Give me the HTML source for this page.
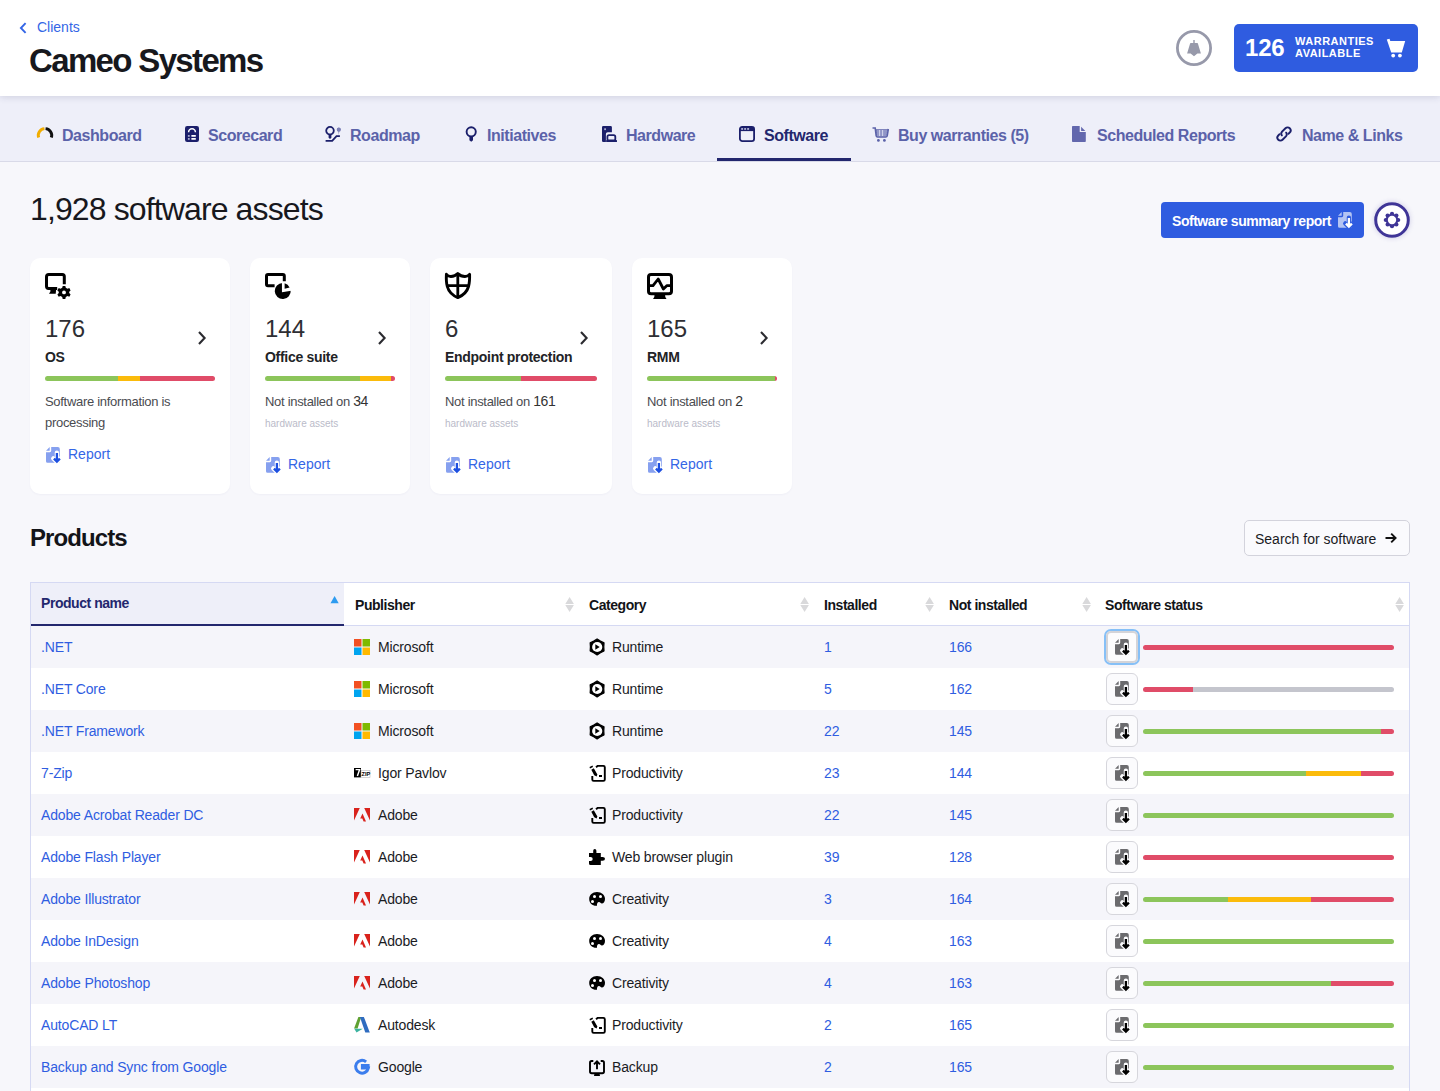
<!DOCTYPE html>
<html><head><meta charset="utf-8">
<style>
*{box-sizing:border-box;margin:0;padding:0}
html,body{width:1440px;height:1091px;overflow:hidden}
body{font-family:"Liberation Sans",sans-serif;background:#f7f7fb;position:relative;color:#15161a}
.abs{position:absolute}
.t{position:absolute;white-space:nowrap}
#hdr{position:absolute;left:0;top:0;width:1440px;height:96px;background:#fff;z-index:3;box-shadow:0 1px 7px rgba(40,40,90,0.16)}
#tabs{position:absolute;left:0;top:96px;width:1440px;height:66px;background:#eeeff9;border-bottom:1px solid #d9dae8;z-index:1}
.tabt{position:absolute;top:30px;font-size:16px;line-height:20px;font-weight:bold;color:#5b62a9;white-space:nowrap;letter-spacing:-0.45px}
.card{position:absolute;top:258px;height:236px;background:#fff;border-radius:10px;box-shadow:0 1px 2px rgba(60,60,120,0.04)}
.bar{position:absolute;height:5px;border-radius:3px;overflow:hidden;display:flex}
.bar i{display:block;height:100%}
.g{background:#8cc55b}.y{background:#fbbb0b}.r{background:#e04c68}.gr{background:#c4c5cd}
.num{font-size:24px;line-height:28px;color:#2e2e33}
.lbl{font-size:14px;line-height:18px;font-weight:bold;color:#222326;letter-spacing:-0.3px}
.ctext{font-size:13px;line-height:21px;color:#4a4b50;letter-spacing:-0.3px}
.hw{font-size:10px;line-height:14px;color:#babbc9}
.rep{font-size:14px;line-height:18px;color:#3466e6}
.row{position:absolute;left:31px;width:1378px;height:42px}
.cell{position:absolute;top:0;height:42px;line-height:42px;font-size:14px;white-space:nowrap;color:#1a1b1f;letter-spacing:-0.15px}
.lnk{color:#2f5de1}
.th{position:absolute;top:0;height:42px;line-height:42px;font-size:14px;font-weight:bold;color:#131418;white-space:nowrap;letter-spacing:-0.45px}
</style></head><body>

<div id="hdr">
<svg class="abs" style="left:18px;top:21px" width="10" height="14" viewBox="0 0 10 14"><path d="M7.6 2.2 L2.9 7 L7.6 11.8" fill="none" stroke="#3466e6" stroke-width="1.9"/></svg>
<div class="t" style="left:37px;top:18px;font-size:14px;line-height:18px;color:#3466e6">Clients</div>
<div class="t" style="left:29px;top:42px;font-size:33px;line-height:38px;font-weight:bold;color:#17181d;letter-spacing:-1.65px">Cameo Systems</div>
<svg class="abs" style="left:1175px;top:29px" width="38" height="38" viewBox="0 0 38 38"><circle cx="19" cy="19" r="16.6" fill="none" stroke="#9799aa" stroke-width="2.8"/><path d="M18.3 11 H19.7 V14.2 H18.3 Z M15.6 14.1 H22.4 Q22.8 14.1 22.9 14.5 L25.9 24.6 H12.1 L15.1 14.5 Q15.2 14.1 15.6 14.1 Z M15.6 24.4 H22.4 L19 27.3 Z" fill="#9799aa"/></svg>
<div class="abs" style="left:1234px;top:24px;width:184px;height:48px;background:#2f5ce0;border-radius:5px"></div>
<div class="t" style="left:1245px;top:34px;font-size:24px;line-height:28px;font-weight:bold;color:#fff;letter-spacing:-0.2px">126</div>
<div class="t" style="left:1295px;top:35px;font-size:11px;line-height:12px;font-weight:bold;color:#fff;letter-spacing:0.5px">WARRANTIES<br>AVAILABLE</div>
<svg class="abs" style="left:1380px;top:32px" width="32" height="32" viewBox="0 0 32 32"><path d="M6.8 7.6 L9.5 6.8 L10.3 9 H25.2 L21.8 20.6 H11.2 Z" fill="#fff"/><circle cx="13.2" cy="23.6" r="1.9" fill="#fff"/><circle cx="19.9" cy="23.6" r="1.9" fill="#fff"/></svg>
</div>
<div id="tabs">
<div class="tabt" style="left:62px;color:#5b62a9">Dashboard</div>
<div class="tabt" style="left:208px;color:#5b62a9">Scorecard</div>
<div class="tabt" style="left:350px;color:#5b62a9">Roadmap</div>
<div class="tabt" style="left:487px;color:#5b62a9">Initiatives</div>
<div class="tabt" style="left:626px;color:#5b62a9">Hardware</div>
<div class="tabt" style="left:764px;color:#23276e">Software</div>
<div class="tabt" style="left:898px;color:#5b62a9">Buy warranties (5)</div>
<div class="tabt" style="left:1097px;color:#5b62a9">Scheduled Reports</div>
<div class="tabt" style="left:1302px;color:#5b62a9">Name &amp; Links</div>
<svg class="abs" style="left:34px;top:29px" width="24" height="16" viewBox="0 0 24 16"><path d="M4.70 12.59 A6.7 6.7 0 0 1 10.42 3.63" fill="none" stroke="#f1ad00" stroke-width="3"/><path d="M11.58 3.63 A6.7 6.7 0 0 1 17.30 12.59" fill="none" stroke="#111" stroke-width="3"/></svg>
<svg class="abs" style="left:185px;top:30px" width="14" height="16" viewBox="0 0 14 16"><rect x="0" y="0" width="14" height="16" rx="2.2" fill="#1b1f6b"/><path d="M3.6 6.2 A3.4 3.4 0 0 1 10.4 6.2" fill="none" stroke="#fff" stroke-width="1.5"/><rect x="2.9" y="9" width="1.8" height="1.8" fill="#a9abcf"/><rect x="6.2" y="9.1" width="4.8" height="1.7" rx=".8" fill="#fff"/><rect x="2.9" y="12" width="1.8" height="1.8" fill="#a9abcf"/><rect x="6.2" y="12.1" width="4.8" height="1.7" rx=".8" fill="#fff"/></svg>
<svg class="abs" style="left:324px;top:30px" width="18" height="17" viewBox="0 0 18 17"><circle cx="6" cy="4.7" r="3.8" fill="none" stroke="#1b1f6b" stroke-width="1.8"/><path d="M4.6 8 H7.4 V11.7 L6 13 L4.6 11.7 Z" fill="#1b1f6b"/><path d="M1.6 14.8 H8.2 L12.5 10.1 H15.9" fill="none" stroke="#1b1f6b" stroke-width="1.8"/><path d="M14.3 5.3 A1.9 1.9 0 1 1 15.3 5.3 L14.8 9 Z" fill="#7b7fb6"/><circle cx="14.8" cy="3.8" r="2" fill="#7b7fb6"/></svg>
<svg class="abs" style="left:464px;top:30px" width="14" height="16" viewBox="0 0 14 16"><circle cx="7.2" cy="5.8" r="4.6" fill="none" stroke="#1b1f6b" stroke-width="1.9"/><path d="M5.4 10 H9 V14.2 L7.2 15.8 L5.4 14.2 Z" fill="#1b1f6b"/></svg>
<svg class="abs" style="left:602px;top:30px" width="16" height="16" viewBox="0 0 16 16"><path d="M1.2 0 H8.6 Q9.9 0 9.9 1.3 V6.3 H5.7 Q3.9 6.3 3.9 8.1 V16 H1.2 Q0 16 0 14.8 V1.3 Q0 0 1.2 0 Z" fill="#1b1f6b"/><rect x="2.2" y="2.3" width="1.8" height="1.8" fill="#a9abcf"/><rect x="5.4" y="9.1" width="7.9" height="5.4" rx="1.6" fill="none" stroke="#1b1f6b" stroke-width="1.8"/><rect x="4.1" y="14.1" width="10.9" height="1.9" rx=".6" fill="#1b1f6b"/></svg>
<svg class="abs" style="left:739px;top:30px" width="16" height="16" viewBox="0 0 16 16"><rect x="0.9" y="0.9" width="14.2" height="14.2" rx="2.4" fill="none" stroke="#1b1f6b" stroke-width="1.8"/><rect x="0.9" y="0.9" width="14.2" height="4.2" fill="#1b1f6b"/><rect x="2.2" y="2" width="1.9" height="1.9" fill="#a9abcf"/><rect x="5.2" y="2" width="1.9" height="1.9" fill="#a9abcf"/><rect x="8.2" y="2" width="1.9" height="1.9" fill="#a9abcf"/></svg>
<svg class="abs" style="left:872px;top:31px" width="18" height="16" viewBox="0 0 18 16"><path d="M0.5 1 H3.2 L4.2 8.9 Q4.4 10 5.5 10 H13.8 Q14.9 10 15.2 8.9 L16.3 2" fill="none" stroke="#5b62a9" stroke-width="1.6"/><path d="M3.6 2.2 H16.3 L15 9.2 H4.4 Z" fill="#5b62a9"/><path d="M4.6 4 H15.2 M4.8 6 H14.9 M5 8 H14.6 M7.6 3 V9 M10.6 3 V9" stroke="#eeeff9" stroke-width=".75"/><circle cx="6.4" cy="13.4" r="1.4" fill="#5b62a9"/><circle cx="12.4" cy="13.4" r="1.4" fill="#5b62a9"/></svg>
<svg class="abs" style="left:1072px;top:30px" width="14" height="16" viewBox="0 0 14 16"><path d="M0.8 0 H7.7 V6 H13.8 V15.2 Q13.8 16 13 16 H0.8 Q0 16 0 15.2 V0.8 Q0 0 0.8 0 Z" fill="#6267ad"/><path d="M9.1 0.7 L13.3 4.9 H9.1 Z" fill="#6267ad"/></svg>
<svg class="abs" style="left:1276px;top:30px" width="16" height="16" viewBox="0 0 16 16"><g transform="translate(9.9,6.1) rotate(-45)"><path d="M-2.2 -3 H-2.2 M0.6 3 H2.4 A3 3 0 0 0 2.4 -3 H-2.4 A3 3 0 0 0 -5.2 -0.6" fill="none" stroke="#1b1f6b" stroke-width="1.9" stroke-linecap="round"/></g><g transform="translate(6.1,9.9) rotate(135)"><path d="M0.6 3 H2.4 A3 3 0 0 0 2.4 -3 H-2.4 A3 3 0 0 0 -5.2 -0.6" fill="none" stroke="#1b1f6b" stroke-width="1.9" stroke-linecap="round"/></g></svg>
<div class="abs" style="left:717px;top:62px;width:134px;height:3px;background:#23276e"></div>
</div>
<div class="t" style="left:30px;top:190px;font-size:32px;line-height:38px;color:#17181d;letter-spacing:-0.88px">1,928 software assets</div>
<div class="abs" style="left:1161px;top:202px;width:203px;height:36px;background:#2f5ce0;border-radius:4px"></div>
<div class="t" style="left:1172px;top:212px;font-size:14px;line-height:18px;font-weight:bold;color:#fff;letter-spacing:-0.46px">Software summary report</div>
<svg class="abs" style="left:1334px;top:207px" width="24" height="24" viewBox="0 0 24 24">
<path d="M4 8.8 L7.7 5 L7.7 8.8 Z" fill="#b4c4f3"/>
<path d="M9.2 5 H15.8 Q17.8 5 17.8 7 V19.2 Q17.8 20.7 16.3 20.7 H5.5 Q4 20.7 4 19.2 V10.2 H7.8 Q9.2 10.2 9.2 8.8 Z" fill="#b4c4f3"/>
<path d="M14.9 10.6 V17.3 M11.2 16.4 L14.9 20.1 L18.6 16.4" fill="none" stroke="#2f5ce0" stroke-width="4.3" stroke-linejoin="round" stroke-linecap="round"/>
<path d="M14.9 10.9 V18.4 M11.9 16.6 L14.9 19.6 L17.9 16.6" fill="none" stroke="#fff" stroke-width="2.3" stroke-linejoin="miter" stroke-linecap="butt"/>
</svg>
<div class="abs" style="left:1374px;top:202px;width:36px;height:36px;border-radius:50%;box-shadow:0 0 5px rgba(70,60,160,0.22)"></div>
<svg class="abs" style="left:1373px;top:201px" width="38" height="38" viewBox="0 0 38 38"><circle cx="19" cy="19" r="16.3" fill="#fff" stroke="#3f3597" stroke-width="3"/><g fill="#3f3597"><circle cx="25.20" cy="19.00" r="2.1"/><circle cx="23.38" cy="23.38" r="2.1"/><circle cx="19.00" cy="25.20" r="2.1"/><circle cx="14.62" cy="23.38" r="2.1"/><circle cx="12.80" cy="19.00" r="2.1"/><circle cx="14.62" cy="14.62" r="2.1"/><circle cx="19.00" cy="12.80" r="2.1"/><circle cx="23.38" cy="14.62" r="2.1"/><circle cx="19" cy="19" r="6.3"/></g><circle cx="19" cy="19" r="4.2" fill="#fff"/></svg>
<div class="card" style="left:30px;width:200px"></div>
<svg class="abs" style="left:40px;top:268px" width="36" height="36" viewBox="0 0 36 36"><path d="M17.2 20.4 H8.6 Q6.5 20.4 6.5 18.3 V8.8 Q6.5 6.5 8.8 6.5 H22.3 Q24.3 6.5 24.3 8.5 V16.2" fill="none" stroke="#000" stroke-width="3"/><path d="M10.4 21 H16.2 L15.7 25.8 H9 L10.4 23.6 Z" fill="#000"/><g transform="translate(24,24.4)"><path d="M-1.3 -6.5 H1.3 L1.8 -4.6 L3.5 -3.6 L5.3 -4.3 L6.6 -2 L5.2 -0.7 V0.7 L6.6 2 L5.3 4.3 L3.5 3.6 L1.8 4.6 L1.3 6.5 H-1.3 L-1.8 4.6 L-3.5 3.6 L-5.3 4.3 L-6.6 2 L-5.2 0.7 V-0.7 L-6.6 -2 L-5.3 -4.3 L-3.5 -3.6 L-1.8 -4.6 Z" fill="#000"/><circle r="1.9" fill="#fff"/></g></svg>
<div class="t num" style="left:45px;top:315px">176</div>
<div class="t lbl" style="left:45px;top:348px">OS</div>
<svg class="abs" style="left:197px;top:330px" width="10" height="16" viewBox="0 0 10 16"><path d="M2 2 L7.6 8 L2 14" fill="none" stroke="#2b2b30" stroke-width="2.1"/></svg>
<div class="bar" style="left:45px;top:376px;width:170px"><i class="g" style="width:73px"></i><i class="y" style="width:22px"></i><i class="r" style="width:75px"></i></div>
<div class="t ctext" style="left:45px;top:391px">Software information is<br>processing</div>
<svg class="abs" style="left:42px;top:442px" width="24" height="24" viewBox="0 0 24 24">
<path d="M4 8.8 L7.7 5 L7.7 8.8 Z" fill="#86a0ef"/>
<path d="M9.2 5 H15.8 Q17.8 5 17.8 7 V19.2 Q17.8 20.7 16.3 20.7 H5.5 Q4 20.7 4 19.2 V10.2 H7.8 Q9.2 10.2 9.2 8.8 Z" fill="#86a0ef"/>
<path d="M14.9 10.6 V17.3 M11.2 16.4 L14.9 20.1 L18.6 16.4" fill="none" stroke="#fff" stroke-width="4.3" stroke-linejoin="round" stroke-linecap="round"/>
<path d="M14.9 10.9 V18.4 M11.9 16.6 L14.9 19.6 L17.9 16.6" fill="none" stroke="#1d4fe0" stroke-width="2.3" stroke-linejoin="miter" stroke-linecap="butt"/>
</svg>
<div class="t rep" style="left:68px;top:445px">Report</div>
<div class="card" style="left:250px;width:160px"></div>
<svg class="abs" style="left:260px;top:268px" width="36" height="36" viewBox="0 0 36 36"><path d="M14.6 17.7 H8 Q6.5 17.7 6.5 16.2 V8 Q6.5 6.5 8 6.5 H22.8 Q24.3 6.5 24.3 8 V13.2" fill="none" stroke="#000" stroke-width="3"/><path d="M22.6 15 A8 8 0 1 0 30.7 22.2 L22.6 23.4 Z" fill="#000"/><path d="M24.6 15.2 A7.6 7.6 0 0 1 29.6 19.6 L24.6 20.7 Z" fill="#000"/><path d="M22.6 14.6 V23.5 L31 22" fill="none" stroke="#fff" stroke-width="1.3"/></svg>
<div class="t num" style="left:265px;top:315px">144</div>
<div class="t lbl" style="left:265px;top:348px">Office suite</div>
<svg class="abs" style="left:377px;top:330px" width="10" height="16" viewBox="0 0 10 16"><path d="M2 2 L7.6 8 L2 14" fill="none" stroke="#2b2b30" stroke-width="2.1"/></svg>
<div class="bar" style="left:265px;top:376px;width:130px"><i class="g" style="width:95px"></i><i class="y" style="width:31px"></i><i class="r" style="width:4px"></i></div>
<div class="t ctext" style="left:265px;top:391px">Not installed on <span style="font-size:14px;color:#333">34</span></div>
<div class="t hw" style="left:265px;top:417px">hardware assets</div>
<svg class="abs" style="left:262px;top:452px" width="24" height="24" viewBox="0 0 24 24">
<path d="M4 8.8 L7.7 5 L7.7 8.8 Z" fill="#86a0ef"/>
<path d="M9.2 5 H15.8 Q17.8 5 17.8 7 V19.2 Q17.8 20.7 16.3 20.7 H5.5 Q4 20.7 4 19.2 V10.2 H7.8 Q9.2 10.2 9.2 8.8 Z" fill="#86a0ef"/>
<path d="M14.9 10.6 V17.3 M11.2 16.4 L14.9 20.1 L18.6 16.4" fill="none" stroke="#fff" stroke-width="4.3" stroke-linejoin="round" stroke-linecap="round"/>
<path d="M14.9 10.9 V18.4 M11.9 16.6 L14.9 19.6 L17.9 16.6" fill="none" stroke="#1d4fe0" stroke-width="2.3" stroke-linejoin="miter" stroke-linecap="butt"/>
</svg>
<div class="t rep" style="left:288px;top:455px">Report</div>
<div class="card" style="left:430px;width:182px"></div>
<svg class="abs" style="left:440px;top:268px" width="36" height="36" viewBox="0 0 36 36"><path d="M6.4 6.3 Q8 8.6 11 8.5 Q15 8.5 17.8 5.6 Q20.8 8.5 24.8 8.5 Q27.8 8.6 29.6 6.3 Q29.8 14 28.5 18.5 Q26.5 26 17.8 29.6 Q9.3 26 7.3 18.5 Q6 14 6.4 6.3 Z" fill="none" stroke="#000" stroke-width="2.9" stroke-linejoin="round"/><path d="M17.8 6.5 V29 M7.4 17.6 H28.4" stroke="#000" stroke-width="2.8"/></svg>
<div class="t num" style="left:445px;top:315px">6</div>
<div class="t lbl" style="left:445px;top:348px">Endpoint protection</div>
<svg class="abs" style="left:579px;top:330px" width="10" height="16" viewBox="0 0 10 16"><path d="M2 2 L7.6 8 L2 14" fill="none" stroke="#2b2b30" stroke-width="2.1"/></svg>
<div class="bar" style="left:445px;top:376px;width:152px"><i class="g" style="width:76px"></i><i class="r" style="width:76px"></i></div>
<div class="t ctext" style="left:445px;top:391px">Not installed on <span style="font-size:14px;color:#333">161</span></div>
<div class="t hw" style="left:445px;top:417px">hardware assets</div>
<svg class="abs" style="left:442px;top:452px" width="24" height="24" viewBox="0 0 24 24">
<path d="M4 8.8 L7.7 5 L7.7 8.8 Z" fill="#86a0ef"/>
<path d="M9.2 5 H15.8 Q17.8 5 17.8 7 V19.2 Q17.8 20.7 16.3 20.7 H5.5 Q4 20.7 4 19.2 V10.2 H7.8 Q9.2 10.2 9.2 8.8 Z" fill="#86a0ef"/>
<path d="M14.9 10.6 V17.3 M11.2 16.4 L14.9 20.1 L18.6 16.4" fill="none" stroke="#fff" stroke-width="4.3" stroke-linejoin="round" stroke-linecap="round"/>
<path d="M14.9 10.9 V18.4 M11.9 16.6 L14.9 19.6 L17.9 16.6" fill="none" stroke="#1d4fe0" stroke-width="2.3" stroke-linejoin="miter" stroke-linecap="butt"/>
</svg>
<div class="t rep" style="left:468px;top:455px">Report</div>
<div class="card" style="left:632px;width:160px"></div>
<svg class="abs" style="left:642px;top:268px" width="36" height="36" viewBox="0 0 36 36"><rect x="6.5" y="6.5" width="23" height="19.3" rx="2.6" fill="none" stroke="#000" stroke-width="3"/><path d="M8 17.6 H11 L16.2 11 L21.4 21 L25 17.6 H28" fill="none" stroke="#000" stroke-width="2.8" stroke-linejoin="round"/><path d="M12.6 26 H23 L23.3 29 L24.5 30.9 H11 L12.3 29 Z" fill="#000"/></svg>
<div class="t num" style="left:647px;top:315px">165</div>
<div class="t lbl" style="left:647px;top:348px">RMM</div>
<svg class="abs" style="left:759px;top:330px" width="10" height="16" viewBox="0 0 10 16"><path d="M2 2 L7.6 8 L2 14" fill="none" stroke="#2b2b30" stroke-width="2.1"/></svg>
<div class="bar" style="left:647px;top:376px;width:130px"><i class="g" style="width:128px"></i><i class="r" style="width:2px"></i></div>
<div class="t ctext" style="left:647px;top:391px">Not installed on <span style="font-size:14px;color:#333">2</span></div>
<div class="t hw" style="left:647px;top:417px">hardware assets</div>
<svg class="abs" style="left:644px;top:452px" width="24" height="24" viewBox="0 0 24 24">
<path d="M4 8.8 L7.7 5 L7.7 8.8 Z" fill="#86a0ef"/>
<path d="M9.2 5 H15.8 Q17.8 5 17.8 7 V19.2 Q17.8 20.7 16.3 20.7 H5.5 Q4 20.7 4 19.2 V10.2 H7.8 Q9.2 10.2 9.2 8.8 Z" fill="#86a0ef"/>
<path d="M14.9 10.6 V17.3 M11.2 16.4 L14.9 20.1 L18.6 16.4" fill="none" stroke="#fff" stroke-width="4.3" stroke-linejoin="round" stroke-linecap="round"/>
<path d="M14.9 10.9 V18.4 M11.9 16.6 L14.9 19.6 L17.9 16.6" fill="none" stroke="#1d4fe0" stroke-width="2.3" stroke-linejoin="miter" stroke-linecap="butt"/>
</svg>
<div class="t rep" style="left:670px;top:455px">Report</div>
<div class="t" style="left:30px;top:524px;font-size:24px;line-height:28px;font-weight:bold;color:#131418;letter-spacing:-0.9px">Products</div>
<div class="abs" style="left:1244px;top:520px;width:166px;height:36px;border:1px solid #d3d3dc;border-radius:5px;background:#fafafd"></div>
<div class="t" style="left:1255px;top:530px;font-size:14px;line-height:18px;color:#1a1b1f">Search for software</div>
<svg class="abs" style="left:1384px;top:531px" width="14" height="14" viewBox="0 0 14 14"><path d="M1.5 7 H11.5 M7.2 2.6 L11.6 7 L7.2 11.4" fill="none" stroke="#111" stroke-width="1.9"/></svg>
<div class="abs" style="left:30px;top:582px;width:1380px;height:520px;border:1px solid #d5d9f3;background:#fff"></div>
<div class="abs" style="left:31px;top:583px;width:313px;height:43px;background:#eeeff9"></div>
<div class="abs" style="left:31px;top:624px;width:313px;height:2px;background:#23276e"></div>
<div class="abs" style="left:344px;top:625px;width:1065px;height:1px;background:#d5d9f3"></div>
<div class="th" style="left:41px;top:582px;color:#23276e">Product name</div>
<svg class="abs" style="left:330px;top:596px" width="10" height="8" viewBox="0 0 10 8"><path d="M0.5 7.2 L4.6 0 L8.7 7.2 Z" fill="#2d9bf0"/></svg>
<div class="th" style="left:355px;top:584px">Publisher</div>
<svg class="abs" style="left:565px;top:596px" width="10" height="17" viewBox="0 0 10 17"><path d="M0.3 7.9 L4.6 1 L8.9 7.9 Z M0.3 8.9 L4.6 15.9 L8.9 8.9 Z" fill="#d9d9db"/></svg>
<div class="th" style="left:589px;top:584px">Category</div>
<svg class="abs" style="left:800px;top:596px" width="10" height="17" viewBox="0 0 10 17"><path d="M0.3 7.9 L4.6 1 L8.9 7.9 Z M0.3 8.9 L4.6 15.9 L8.9 8.9 Z" fill="#d9d9db"/></svg>
<div class="th" style="left:824px;top:584px">Installed</div>
<svg class="abs" style="left:925px;top:596px" width="10" height="17" viewBox="0 0 10 17"><path d="M0.3 7.9 L4.6 1 L8.9 7.9 Z M0.3 8.9 L4.6 15.9 L8.9 8.9 Z" fill="#d9d9db"/></svg>
<div class="th" style="left:949px;top:584px">Not installed</div>
<svg class="abs" style="left:1082px;top:596px" width="10" height="17" viewBox="0 0 10 17"><path d="M0.3 7.9 L4.6 1 L8.9 7.9 Z M0.3 8.9 L4.6 15.9 L8.9 8.9 Z" fill="#d9d9db"/></svg>
<div class="th" style="left:1105px;top:584px">Software status</div>
<svg class="abs" style="left:1395px;top:596px" width="10" height="17" viewBox="0 0 10 17"><path d="M0.3 7.9 L4.6 1 L8.9 7.9 Z M0.3 8.9 L4.6 15.9 L8.9 8.9 Z" fill="#d9d9db"/></svg>
<div class="row" style="top:626px;background:#f5f5fa"></div>
<div class="cell lnk" style="left:41px;top:626px">.NET</div>
<svg class="abs" style="left:350px;top:636px" width="24" height="24" viewBox="0 0 24 24"><rect x="4" y="3" width="7.5" height="7.5" fill="#f25022"/><rect x="12.5" y="3" width="7.5" height="7.5" fill="#7fba00"/><rect x="4" y="11.5" width="7.5" height="7.5" fill="#00a4ef"/><rect x="12.5" y="11.5" width="7.5" height="7.5" fill="#ffb900"/></svg>
<div class="cell" style="left:378px;top:626px">Microsoft</div>
<svg class="abs" style="left:585px;top:636px" width="24" height="24" viewBox="0 0 24 24"><path d="M12.10 2.90 L15.44 5.12 L19.03 6.90 L18.78 10.90 L19.03 14.90 L15.44 16.68 L12.10 18.90 L8.76 16.68 L5.17 14.90 L5.42 10.90 L5.17 6.90 L8.76 5.12 Z" fill="#000" stroke="#000" stroke-width="1.2" stroke-linejoin="round"/><circle cx="12.2" cy="11" r="5.1" fill="#fff"/><path d="M10.3 8.2 L14.7 11 L10.3 13.8 Z" fill="#000"/></svg>
<div class="cell" style="left:612px;top:626px">Runtime</div>
<div class="cell lnk" style="left:824px;top:626px">1</div>
<div class="cell lnk" style="left:949px;top:626px">166</div>
<div class="abs" style="left:1104px;top:629px;width:36px;height:36px;border:2px solid #86c0f7;border-radius:7px"></div>
<div class="abs" style="left:1106px;top:631px;width:32px;height:32px;border:2px solid #d4d4d8;border-radius:5px;background:#fcfcfd"></div>
<svg class="abs" style="left:1111px;top:634px" width="24" height="24" viewBox="0 0 24 24">
<path d="M4 8.8 L7.7 5 L7.7 8.8 Z" fill="#6b6b6e"/>
<path d="M9.2 5 H15.8 Q17.8 5 17.8 7 V19.2 Q17.8 20.7 16.3 20.7 H5.5 Q4 20.7 4 19.2 V10.2 H7.8 Q9.2 10.2 9.2 8.8 Z" fill="#6b6b6e"/>
<path d="M14.9 10.6 V17.3 M11.2 16.4 L14.9 20.1 L18.6 16.4" fill="none" stroke="#fbfbfd" stroke-width="4.3" stroke-linejoin="round" stroke-linecap="round"/>
<path d="M14.9 10.9 V18.4 M11.9 16.6 L14.9 19.6 L17.9 16.6" fill="none" stroke="#000" stroke-width="2.3" stroke-linejoin="miter" stroke-linecap="butt"/>
</svg>
<div class="bar" style="left:1143px;top:645px;width:251px"><i class="r" style="width:251px"></i></div>
<div class="row" style="top:668px;background:#fff"></div>
<div class="cell lnk" style="left:41px;top:668px">.NET Core</div>
<svg class="abs" style="left:350px;top:678px" width="24" height="24" viewBox="0 0 24 24"><rect x="4" y="3" width="7.5" height="7.5" fill="#f25022"/><rect x="12.5" y="3" width="7.5" height="7.5" fill="#7fba00"/><rect x="4" y="11.5" width="7.5" height="7.5" fill="#00a4ef"/><rect x="12.5" y="11.5" width="7.5" height="7.5" fill="#ffb900"/></svg>
<div class="cell" style="left:378px;top:668px">Microsoft</div>
<svg class="abs" style="left:585px;top:678px" width="24" height="24" viewBox="0 0 24 24"><path d="M12.10 2.90 L15.44 5.12 L19.03 6.90 L18.78 10.90 L19.03 14.90 L15.44 16.68 L12.10 18.90 L8.76 16.68 L5.17 14.90 L5.42 10.90 L5.17 6.90 L8.76 5.12 Z" fill="#000" stroke="#000" stroke-width="1.2" stroke-linejoin="round"/><circle cx="12.2" cy="11" r="5.1" fill="#fff"/><path d="M10.3 8.2 L14.7 11 L10.3 13.8 Z" fill="#000"/></svg>
<div class="cell" style="left:612px;top:668px">Runtime</div>
<div class="cell lnk" style="left:824px;top:668px">5</div>
<div class="cell lnk" style="left:949px;top:668px">162</div>
<div class="abs" style="left:1106px;top:673px;width:32px;height:32px;border:1px solid #d6d6dc;border-radius:6px;background:#fbfbfd"></div>
<svg class="abs" style="left:1111px;top:676px" width="24" height="24" viewBox="0 0 24 24">
<path d="M4 8.8 L7.7 5 L7.7 8.8 Z" fill="#6b6b6e"/>
<path d="M9.2 5 H15.8 Q17.8 5 17.8 7 V19.2 Q17.8 20.7 16.3 20.7 H5.5 Q4 20.7 4 19.2 V10.2 H7.8 Q9.2 10.2 9.2 8.8 Z" fill="#6b6b6e"/>
<path d="M14.9 10.6 V17.3 M11.2 16.4 L14.9 20.1 L18.6 16.4" fill="none" stroke="#fbfbfd" stroke-width="4.3" stroke-linejoin="round" stroke-linecap="round"/>
<path d="M14.9 10.9 V18.4 M11.9 16.6 L14.9 19.6 L17.9 16.6" fill="none" stroke="#000" stroke-width="2.3" stroke-linejoin="miter" stroke-linecap="butt"/>
</svg>
<div class="bar" style="left:1143px;top:687px;width:251px"><i class="r" style="width:50px"></i><i class="gr" style="width:201px"></i></div>
<div class="row" style="top:710px;background:#f5f5fa"></div>
<div class="cell lnk" style="left:41px;top:710px">.NET Framework</div>
<svg class="abs" style="left:350px;top:720px" width="24" height="24" viewBox="0 0 24 24"><rect x="4" y="3" width="7.5" height="7.5" fill="#f25022"/><rect x="12.5" y="3" width="7.5" height="7.5" fill="#7fba00"/><rect x="4" y="11.5" width="7.5" height="7.5" fill="#00a4ef"/><rect x="12.5" y="11.5" width="7.5" height="7.5" fill="#ffb900"/></svg>
<div class="cell" style="left:378px;top:710px">Microsoft</div>
<svg class="abs" style="left:585px;top:720px" width="24" height="24" viewBox="0 0 24 24"><path d="M12.10 2.90 L15.44 5.12 L19.03 6.90 L18.78 10.90 L19.03 14.90 L15.44 16.68 L12.10 18.90 L8.76 16.68 L5.17 14.90 L5.42 10.90 L5.17 6.90 L8.76 5.12 Z" fill="#000" stroke="#000" stroke-width="1.2" stroke-linejoin="round"/><circle cx="12.2" cy="11" r="5.1" fill="#fff"/><path d="M10.3 8.2 L14.7 11 L10.3 13.8 Z" fill="#000"/></svg>
<div class="cell" style="left:612px;top:710px">Runtime</div>
<div class="cell lnk" style="left:824px;top:710px">22</div>
<div class="cell lnk" style="left:949px;top:710px">145</div>
<div class="abs" style="left:1106px;top:715px;width:32px;height:32px;border:1px solid #d6d6dc;border-radius:6px;background:#fbfbfd"></div>
<svg class="abs" style="left:1111px;top:718px" width="24" height="24" viewBox="0 0 24 24">
<path d="M4 8.8 L7.7 5 L7.7 8.8 Z" fill="#6b6b6e"/>
<path d="M9.2 5 H15.8 Q17.8 5 17.8 7 V19.2 Q17.8 20.7 16.3 20.7 H5.5 Q4 20.7 4 19.2 V10.2 H7.8 Q9.2 10.2 9.2 8.8 Z" fill="#6b6b6e"/>
<path d="M14.9 10.6 V17.3 M11.2 16.4 L14.9 20.1 L18.6 16.4" fill="none" stroke="#fbfbfd" stroke-width="4.3" stroke-linejoin="round" stroke-linecap="round"/>
<path d="M14.9 10.9 V18.4 M11.9 16.6 L14.9 19.6 L17.9 16.6" fill="none" stroke="#000" stroke-width="2.3" stroke-linejoin="miter" stroke-linecap="butt"/>
</svg>
<div class="bar" style="left:1143px;top:729px;width:251px"><i class="g" style="width:238px"></i><i class="r" style="width:13px"></i></div>
<div class="row" style="top:752px;background:#fff"></div>
<div class="cell lnk" style="left:41px;top:752px">7-Zip</div>
<svg class="abs" style="left:350px;top:762px" width="24" height="24" viewBox="0 0 24 24"><rect x="4" y="6" width="7" height="9.4" fill="#000"/><path d="M5.6 7.6 H9.6 L7.4 14" fill="none" stroke="#fff" stroke-width="1.4"/><rect x="11.1" y="8.3" width="8.9" height="7.1" fill="#fff" stroke="#b8b8b8" stroke-width=".6"/><text x="11.6" y="14" font-family="Liberation Sans" font-weight="bold" font-size="5.6" fill="#000">ZIP</text></svg>
<div class="cell" style="left:378px;top:752px">Igor Pavlov</div>
<svg class="abs" style="left:585px;top:762px" width="24" height="24" viewBox="0 0 24 24"><path d="M11 5.2 L12.6 3.9 H18.4 Q19.8 3.9 19.8 5.3 V17.5 Q19.8 18.9 18.4 18.9 H8.6 Q7.3 18.9 7.3 17.5 V14" fill="none" stroke="#000" stroke-width="1.9"/><path d="M4.5 5 L7.5 3.6 L8 5 L5 6.5 Z M6.3 7.8 L8.8 6.2 L12.4 12.6 L11.6 14.6 L9.2 13.2 Z" fill="#000"/><rect x="14" y="13" width="3" height="2" fill="#000"/></svg>
<div class="cell" style="left:612px;top:752px">Productivity</div>
<div class="cell lnk" style="left:824px;top:752px">23</div>
<div class="cell lnk" style="left:949px;top:752px">144</div>
<div class="abs" style="left:1106px;top:757px;width:32px;height:32px;border:1px solid #d6d6dc;border-radius:6px;background:#fbfbfd"></div>
<svg class="abs" style="left:1111px;top:760px" width="24" height="24" viewBox="0 0 24 24">
<path d="M4 8.8 L7.7 5 L7.7 8.8 Z" fill="#6b6b6e"/>
<path d="M9.2 5 H15.8 Q17.8 5 17.8 7 V19.2 Q17.8 20.7 16.3 20.7 H5.5 Q4 20.7 4 19.2 V10.2 H7.8 Q9.2 10.2 9.2 8.8 Z" fill="#6b6b6e"/>
<path d="M14.9 10.6 V17.3 M11.2 16.4 L14.9 20.1 L18.6 16.4" fill="none" stroke="#fbfbfd" stroke-width="4.3" stroke-linejoin="round" stroke-linecap="round"/>
<path d="M14.9 10.9 V18.4 M11.9 16.6 L14.9 19.6 L17.9 16.6" fill="none" stroke="#000" stroke-width="2.3" stroke-linejoin="miter" stroke-linecap="butt"/>
</svg>
<div class="bar" style="left:1143px;top:771px;width:251px"><i class="g" style="width:163px"></i><i class="y" style="width:55px"></i><i class="r" style="width:33px"></i></div>
<div class="row" style="top:794px;background:#f5f5fa"></div>
<div class="cell lnk" style="left:41px;top:794px">Adobe Acrobat Reader DC</div>
<svg class="abs" style="left:350px;top:804px" width="24" height="24" viewBox="0 0 24 24"><path d="M4 4 H9.8 L4 16.5 Z M14.2 4 H20 V16.5 Z M12.5 9.5 L16 17.5 H13.6 L12.3 14.6 H10.2 Z" fill="#d9221c"/></svg>
<div class="cell" style="left:378px;top:794px">Adobe</div>
<svg class="abs" style="left:585px;top:804px" width="24" height="24" viewBox="0 0 24 24"><path d="M11 5.2 L12.6 3.9 H18.4 Q19.8 3.9 19.8 5.3 V17.5 Q19.8 18.9 18.4 18.9 H8.6 Q7.3 18.9 7.3 17.5 V14" fill="none" stroke="#000" stroke-width="1.9"/><path d="M4.5 5 L7.5 3.6 L8 5 L5 6.5 Z M6.3 7.8 L8.8 6.2 L12.4 12.6 L11.6 14.6 L9.2 13.2 Z" fill="#000"/><rect x="14" y="13" width="3" height="2" fill="#000"/></svg>
<div class="cell" style="left:612px;top:794px">Productivity</div>
<div class="cell lnk" style="left:824px;top:794px">22</div>
<div class="cell lnk" style="left:949px;top:794px">145</div>
<div class="abs" style="left:1106px;top:799px;width:32px;height:32px;border:1px solid #d6d6dc;border-radius:6px;background:#fbfbfd"></div>
<svg class="abs" style="left:1111px;top:802px" width="24" height="24" viewBox="0 0 24 24">
<path d="M4 8.8 L7.7 5 L7.7 8.8 Z" fill="#6b6b6e"/>
<path d="M9.2 5 H15.8 Q17.8 5 17.8 7 V19.2 Q17.8 20.7 16.3 20.7 H5.5 Q4 20.7 4 19.2 V10.2 H7.8 Q9.2 10.2 9.2 8.8 Z" fill="#6b6b6e"/>
<path d="M14.9 10.6 V17.3 M11.2 16.4 L14.9 20.1 L18.6 16.4" fill="none" stroke="#fbfbfd" stroke-width="4.3" stroke-linejoin="round" stroke-linecap="round"/>
<path d="M14.9 10.9 V18.4 M11.9 16.6 L14.9 19.6 L17.9 16.6" fill="none" stroke="#000" stroke-width="2.3" stroke-linejoin="miter" stroke-linecap="butt"/>
</svg>
<div class="bar" style="left:1143px;top:813px;width:251px"><i class="g" style="width:251px"></i></div>
<div class="row" style="top:836px;background:#fff"></div>
<div class="cell lnk" style="left:41px;top:836px">Adobe Flash Player</div>
<svg class="abs" style="left:350px;top:846px" width="24" height="24" viewBox="0 0 24 24"><path d="M4 4 H9.8 L4 16.5 Z M14.2 4 H20 V16.5 Z M12.5 9.5 L16 17.5 H13.6 L12.3 14.6 H10.2 Z" fill="#d9221c"/></svg>
<div class="cell" style="left:378px;top:836px">Adobe</div>
<svg class="abs" style="left:585px;top:846px" width="24" height="24" viewBox="0 0 24 24"><path d="M4 7 H8.2 V4.8 Q8.2 3 9.8 3 Q11.4 3 11.4 4.8 V7 H15.8 V11 H17.6 Q20 11 20 12.7 Q20 14.7 17.6 14.7 H15.8 V19 H5.5 Q4 19 4 17.4 V15 H5.6 Q7.7 15 7.7 13 Q7.7 11 5.6 11 H4 Z" fill="#000"/></svg>
<div class="cell" style="left:612px;top:836px">Web browser plugin</div>
<div class="cell lnk" style="left:824px;top:836px">39</div>
<div class="cell lnk" style="left:949px;top:836px">128</div>
<div class="abs" style="left:1106px;top:841px;width:32px;height:32px;border:1px solid #d6d6dc;border-radius:6px;background:#fbfbfd"></div>
<svg class="abs" style="left:1111px;top:844px" width="24" height="24" viewBox="0 0 24 24">
<path d="M4 8.8 L7.7 5 L7.7 8.8 Z" fill="#6b6b6e"/>
<path d="M9.2 5 H15.8 Q17.8 5 17.8 7 V19.2 Q17.8 20.7 16.3 20.7 H5.5 Q4 20.7 4 19.2 V10.2 H7.8 Q9.2 10.2 9.2 8.8 Z" fill="#6b6b6e"/>
<path d="M14.9 10.6 V17.3 M11.2 16.4 L14.9 20.1 L18.6 16.4" fill="none" stroke="#fbfbfd" stroke-width="4.3" stroke-linejoin="round" stroke-linecap="round"/>
<path d="M14.9 10.9 V18.4 M11.9 16.6 L14.9 19.6 L17.9 16.6" fill="none" stroke="#000" stroke-width="2.3" stroke-linejoin="miter" stroke-linecap="butt"/>
</svg>
<div class="bar" style="left:1143px;top:855px;width:251px"><i class="r" style="width:251px"></i></div>
<div class="row" style="top:878px;background:#f5f5fa"></div>
<div class="cell lnk" style="left:41px;top:878px">Adobe Illustrator</div>
<svg class="abs" style="left:350px;top:888px" width="24" height="24" viewBox="0 0 24 24"><path d="M4 4 H9.8 L4 16.5 Z M14.2 4 H20 V16.5 Z M12.5 9.5 L16 17.5 H13.6 L12.3 14.6 H10.2 Z" fill="#d9221c"/></svg>
<div class="cell" style="left:378px;top:878px">Adobe</div>
<svg class="abs" style="left:585px;top:888px" width="24" height="24" viewBox="0 0 24 24"><path d="M12 4 C16.6 4 20 7 20 10.8 C20 13.5 18.6 15.5 16.8 15.6 C15.8 15.6 15.2 14 14 14 C12.3 14 11.8 15.8 12 17.7 C8 18.2 4.2 15.4 4.2 11 C4.2 7 7.5 4 12 4 Z" fill="#000"/><circle cx="9.5" cy="8.5" r="1.5" fill="#fff"/><circle cx="15.5" cy="8.5" r="1.5" fill="#fff"/><circle cx="7.5" cy="13.5" r="1.5" fill="#fff"/></svg>
<div class="cell" style="left:612px;top:878px">Creativity</div>
<div class="cell lnk" style="left:824px;top:878px">3</div>
<div class="cell lnk" style="left:949px;top:878px">164</div>
<div class="abs" style="left:1106px;top:883px;width:32px;height:32px;border:1px solid #d6d6dc;border-radius:6px;background:#fbfbfd"></div>
<svg class="abs" style="left:1111px;top:886px" width="24" height="24" viewBox="0 0 24 24">
<path d="M4 8.8 L7.7 5 L7.7 8.8 Z" fill="#6b6b6e"/>
<path d="M9.2 5 H15.8 Q17.8 5 17.8 7 V19.2 Q17.8 20.7 16.3 20.7 H5.5 Q4 20.7 4 19.2 V10.2 H7.8 Q9.2 10.2 9.2 8.8 Z" fill="#6b6b6e"/>
<path d="M14.9 10.6 V17.3 M11.2 16.4 L14.9 20.1 L18.6 16.4" fill="none" stroke="#fbfbfd" stroke-width="4.3" stroke-linejoin="round" stroke-linecap="round"/>
<path d="M14.9 10.9 V18.4 M11.9 16.6 L14.9 19.6 L17.9 16.6" fill="none" stroke="#000" stroke-width="2.3" stroke-linejoin="miter" stroke-linecap="butt"/>
</svg>
<div class="bar" style="left:1143px;top:897px;width:251px"><i class="g" style="width:85px"></i><i class="y" style="width:83px"></i><i class="r" style="width:83px"></i></div>
<div class="row" style="top:920px;background:#fff"></div>
<div class="cell lnk" style="left:41px;top:920px">Adobe InDesign</div>
<svg class="abs" style="left:350px;top:930px" width="24" height="24" viewBox="0 0 24 24"><path d="M4 4 H9.8 L4 16.5 Z M14.2 4 H20 V16.5 Z M12.5 9.5 L16 17.5 H13.6 L12.3 14.6 H10.2 Z" fill="#d9221c"/></svg>
<div class="cell" style="left:378px;top:920px">Adobe</div>
<svg class="abs" style="left:585px;top:930px" width="24" height="24" viewBox="0 0 24 24"><path d="M12 4 C16.6 4 20 7 20 10.8 C20 13.5 18.6 15.5 16.8 15.6 C15.8 15.6 15.2 14 14 14 C12.3 14 11.8 15.8 12 17.7 C8 18.2 4.2 15.4 4.2 11 C4.2 7 7.5 4 12 4 Z" fill="#000"/><circle cx="9.5" cy="8.5" r="1.5" fill="#fff"/><circle cx="15.5" cy="8.5" r="1.5" fill="#fff"/><circle cx="7.5" cy="13.5" r="1.5" fill="#fff"/></svg>
<div class="cell" style="left:612px;top:920px">Creativity</div>
<div class="cell lnk" style="left:824px;top:920px">4</div>
<div class="cell lnk" style="left:949px;top:920px">163</div>
<div class="abs" style="left:1106px;top:925px;width:32px;height:32px;border:1px solid #d6d6dc;border-radius:6px;background:#fbfbfd"></div>
<svg class="abs" style="left:1111px;top:928px" width="24" height="24" viewBox="0 0 24 24">
<path d="M4 8.8 L7.7 5 L7.7 8.8 Z" fill="#6b6b6e"/>
<path d="M9.2 5 H15.8 Q17.8 5 17.8 7 V19.2 Q17.8 20.7 16.3 20.7 H5.5 Q4 20.7 4 19.2 V10.2 H7.8 Q9.2 10.2 9.2 8.8 Z" fill="#6b6b6e"/>
<path d="M14.9 10.6 V17.3 M11.2 16.4 L14.9 20.1 L18.6 16.4" fill="none" stroke="#fbfbfd" stroke-width="4.3" stroke-linejoin="round" stroke-linecap="round"/>
<path d="M14.9 10.9 V18.4 M11.9 16.6 L14.9 19.6 L17.9 16.6" fill="none" stroke="#000" stroke-width="2.3" stroke-linejoin="miter" stroke-linecap="butt"/>
</svg>
<div class="bar" style="left:1143px;top:939px;width:251px"><i class="g" style="width:251px"></i></div>
<div class="row" style="top:962px;background:#f5f5fa"></div>
<div class="cell lnk" style="left:41px;top:962px">Adobe Photoshop</div>
<svg class="abs" style="left:350px;top:972px" width="24" height="24" viewBox="0 0 24 24"><path d="M4 4 H9.8 L4 16.5 Z M14.2 4 H20 V16.5 Z M12.5 9.5 L16 17.5 H13.6 L12.3 14.6 H10.2 Z" fill="#d9221c"/></svg>
<div class="cell" style="left:378px;top:962px">Adobe</div>
<svg class="abs" style="left:585px;top:972px" width="24" height="24" viewBox="0 0 24 24"><path d="M12 4 C16.6 4 20 7 20 10.8 C20 13.5 18.6 15.5 16.8 15.6 C15.8 15.6 15.2 14 14 14 C12.3 14 11.8 15.8 12 17.7 C8 18.2 4.2 15.4 4.2 11 C4.2 7 7.5 4 12 4 Z" fill="#000"/><circle cx="9.5" cy="8.5" r="1.5" fill="#fff"/><circle cx="15.5" cy="8.5" r="1.5" fill="#fff"/><circle cx="7.5" cy="13.5" r="1.5" fill="#fff"/></svg>
<div class="cell" style="left:612px;top:962px">Creativity</div>
<div class="cell lnk" style="left:824px;top:962px">4</div>
<div class="cell lnk" style="left:949px;top:962px">163</div>
<div class="abs" style="left:1106px;top:967px;width:32px;height:32px;border:1px solid #d6d6dc;border-radius:6px;background:#fbfbfd"></div>
<svg class="abs" style="left:1111px;top:970px" width="24" height="24" viewBox="0 0 24 24">
<path d="M4 8.8 L7.7 5 L7.7 8.8 Z" fill="#6b6b6e"/>
<path d="M9.2 5 H15.8 Q17.8 5 17.8 7 V19.2 Q17.8 20.7 16.3 20.7 H5.5 Q4 20.7 4 19.2 V10.2 H7.8 Q9.2 10.2 9.2 8.8 Z" fill="#6b6b6e"/>
<path d="M14.9 10.6 V17.3 M11.2 16.4 L14.9 20.1 L18.6 16.4" fill="none" stroke="#fbfbfd" stroke-width="4.3" stroke-linejoin="round" stroke-linecap="round"/>
<path d="M14.9 10.9 V18.4 M11.9 16.6 L14.9 19.6 L17.9 16.6" fill="none" stroke="#000" stroke-width="2.3" stroke-linejoin="miter" stroke-linecap="butt"/>
</svg>
<div class="bar" style="left:1143px;top:981px;width:251px"><i class="g" style="width:188px"></i><i class="r" style="width:63px"></i></div>
<div class="row" style="top:1004px;background:#fff"></div>
<div class="cell lnk" style="left:41px;top:1004px">AutoCAD LT</div>
<svg class="abs" style="left:350px;top:1014px" width="24" height="24" viewBox="0 0 24 24"><path d="M8.4 3 L11.2 3 L7.6 14.5 H4.1 Z" fill="#5fa131"/><path d="M9.9 3.1 H13.9 L19.8 18.4 H15.3 Z" fill="#2f6cc0"/><path d="M4.3 14.7 H12.8 L6.5 18.6 Z" fill="#3cb3a0"/></svg>
<div class="cell" style="left:378px;top:1004px">Autodesk</div>
<svg class="abs" style="left:585px;top:1014px" width="24" height="24" viewBox="0 0 24 24"><path d="M11 5.2 L12.6 3.9 H18.4 Q19.8 3.9 19.8 5.3 V17.5 Q19.8 18.9 18.4 18.9 H8.6 Q7.3 18.9 7.3 17.5 V14" fill="none" stroke="#000" stroke-width="1.9"/><path d="M4.5 5 L7.5 3.6 L8 5 L5 6.5 Z M6.3 7.8 L8.8 6.2 L12.4 12.6 L11.6 14.6 L9.2 13.2 Z" fill="#000"/><rect x="14" y="13" width="3" height="2" fill="#000"/></svg>
<div class="cell" style="left:612px;top:1004px">Productivity</div>
<div class="cell lnk" style="left:824px;top:1004px">2</div>
<div class="cell lnk" style="left:949px;top:1004px">165</div>
<div class="abs" style="left:1106px;top:1009px;width:32px;height:32px;border:1px solid #d6d6dc;border-radius:6px;background:#fbfbfd"></div>
<svg class="abs" style="left:1111px;top:1012px" width="24" height="24" viewBox="0 0 24 24">
<path d="M4 8.8 L7.7 5 L7.7 8.8 Z" fill="#6b6b6e"/>
<path d="M9.2 5 H15.8 Q17.8 5 17.8 7 V19.2 Q17.8 20.7 16.3 20.7 H5.5 Q4 20.7 4 19.2 V10.2 H7.8 Q9.2 10.2 9.2 8.8 Z" fill="#6b6b6e"/>
<path d="M14.9 10.6 V17.3 M11.2 16.4 L14.9 20.1 L18.6 16.4" fill="none" stroke="#fbfbfd" stroke-width="4.3" stroke-linejoin="round" stroke-linecap="round"/>
<path d="M14.9 10.9 V18.4 M11.9 16.6 L14.9 19.6 L17.9 16.6" fill="none" stroke="#000" stroke-width="2.3" stroke-linejoin="miter" stroke-linecap="butt"/>
</svg>
<div class="bar" style="left:1143px;top:1023px;width:251px"><i class="g" style="width:251px"></i></div>
<div class="row" style="top:1046px;background:#f5f5fa"></div>
<div class="cell lnk" style="left:41px;top:1046px">Backup and Sync from Google</div>
<svg class="abs" style="left:350px;top:1056px" width="24" height="24" viewBox="0 0 24 24"><path d="M16.1 5.8 A6.4 6.4 0 1 0 18.3 12.1 H12.4 V9.6 H19.6" fill="none" stroke="#3b7ded" stroke-width="3"/></svg>
<div class="cell" style="left:378px;top:1046px">Google</div>
<svg class="abs" style="left:585px;top:1056px" width="24" height="24" viewBox="0 0 24 24"><path d="M8.3 5 H6.7 Q5 5 5 6.7 V15.6 Q5 17.3 6.7 17.3 H17.3 Q19 17.3 19 15.6 V6.7 Q19 5 17.3 5 H15.7" fill="none" stroke="#000" stroke-width="1.9"/><path d="M9.6 17 H14.4 L15 19.9 H9 Z" fill="#000"/><path d="M12 13.2 V5.4 M9 8.3 L12 5.3 L15 8.3" fill="none" stroke="#000" stroke-width="1.9"/></svg>
<div class="cell" style="left:612px;top:1046px">Backup</div>
<div class="cell lnk" style="left:824px;top:1046px">2</div>
<div class="cell lnk" style="left:949px;top:1046px">165</div>
<div class="abs" style="left:1106px;top:1051px;width:32px;height:32px;border:1px solid #d6d6dc;border-radius:6px;background:#fbfbfd"></div>
<svg class="abs" style="left:1111px;top:1054px" width="24" height="24" viewBox="0 0 24 24">
<path d="M4 8.8 L7.7 5 L7.7 8.8 Z" fill="#6b6b6e"/>
<path d="M9.2 5 H15.8 Q17.8 5 17.8 7 V19.2 Q17.8 20.7 16.3 20.7 H5.5 Q4 20.7 4 19.2 V10.2 H7.8 Q9.2 10.2 9.2 8.8 Z" fill="#6b6b6e"/>
<path d="M14.9 10.6 V17.3 M11.2 16.4 L14.9 20.1 L18.6 16.4" fill="none" stroke="#fbfbfd" stroke-width="4.3" stroke-linejoin="round" stroke-linecap="round"/>
<path d="M14.9 10.9 V18.4 M11.9 16.6 L14.9 19.6 L17.9 16.6" fill="none" stroke="#000" stroke-width="2.3" stroke-linejoin="miter" stroke-linecap="butt"/>
</svg>
<div class="bar" style="left:1143px;top:1065px;width:251px"><i class="g" style="width:251px"></i></div>
<div class="row" style="top:1088px;background:#fff"></div>
</body></html>
